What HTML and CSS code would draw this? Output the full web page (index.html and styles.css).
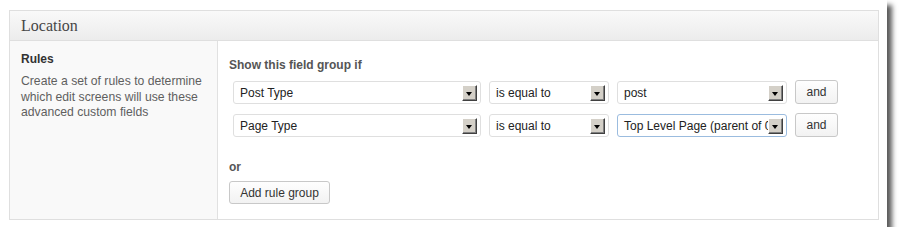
FILE: index.html
```html
<!DOCTYPE html>
<html>
<head>
<meta charset="utf-8">
<link rel="stylesheet" href="styles.css">
</head>
<body>
<div class="shot">
  <div class="postbox">
    <div class="hndle">Location</div>
    <div class="inside">
      <div class="label-col">
        <div class="label">Rules</div>
        <p class="desc">Create a set of rules to determine which edit screens will use these advanced custom fields</p>
      </div>
      <div class="field-col">
        <div class="title">Show this field group if</div>
        <div class="rules">
          <div class="rule">
            <div class="select s-param"><span class="val">Post Type</span><span class="arrow"></span></div>
            <div class="select s-op"><span class="val">is equal to</span><span class="arrow"></span></div>
            <div class="select s-value"><span class="val">post</span><span class="arrow"></span></div>
            <button class="btn btn-and">and</button>
          </div>
          <div class="rule">
            <div class="select s-param"><span class="val">Page Type</span><span class="arrow"></span></div>
            <div class="select s-op"><span class="val">is equal to</span><span class="arrow"></span></div>
            <div class="select s-value focused"><span class="val">Top Level Page (parent of 0)</span><span class="arrow"></span></div>
            <button class="btn btn-and">and</button>
          </div>
        </div>
        <div class="or">or</div>
        <button class="btn btn-add">Add rule group</button>
      </div>
    </div>
  </div>
</div>
</body>
</html>
```

FILE: styles.css
```css
html, body {
  margin: 0;
  padding: 0;
  background: #ffffff;
}

.shot {
  width: 887px;
  height: 227px;
  background: #ffffff;
  box-shadow: 5px 5px 5px rgba(0, 0, 0, 0.65);
  padding: 10px 0 0 9px;
  box-sizing: border-box;
  font-family: "Liberation Sans", Arial, sans-serif;
  font-size: 12px;
}

.postbox {
  width: 870px;
  height: 210px;
  box-sizing: border-box;
  border: 1px solid #dfdfdf;
  display: flex;
  flex-direction: column;
}

.hndle {
  height: 29px;
  border-bottom: 1px solid #dfdfdf;
  background: linear-gradient(to bottom, #f9f9f9, #ececec);
  font-family: "Liberation Serif", Georgia, serif;
  font-size: 16px;
  color: #464646;
  line-height: 29px;
  padding-left: 11px;
}

.inside {
  flex: 1;
  display: flex;
}

.label-col {
  width: 208px;
  flex: none;
  box-sizing: border-box;
  background: #f9f9f9;
  border-right: 1px solid #e1e1e1;
  padding: 10px 11px 0 11px;
}

.label {
  font-weight: bold;
  color: #333;
  line-height: 16px;
}

.desc {
  margin: 7px 0 0 0;
  color: #5f5f5f;
  line-height: 15.6px;
  font-size: 12.2px;
}

.field-col {
  flex: 1;
  padding: 16px 11px 0 11px;
}

.title {
  font-weight: bold;
  color: #555;
  line-height: 16px;
}

.rules {
  margin-top: 8px;
  display: flex;
  flex-direction: column;
  gap: 10px;
  padding-left: 4px;
}

.rule {
  display: flex;
  align-items: center;
  height: 23px;
}

.select {
  height: 23px;
  box-sizing: border-box;
  border: 1px solid #dfdfdf;
  border-radius: 3px;
  background: #fff;
  display: flex;
  align-items: center;
  color: #222;
  margin-right: 8px;
}

.select.focused {
  border-color: #9bbcdf;
}

.val {
  flex: 1;
  overflow: hidden;
  white-space: nowrap;
  padding-left: 6px;
  line-height: 16px;
}

.arrow {
  flex: none;
  width: 15px;
  height: 16px;
  box-sizing: border-box;
  margin-right: 3px;
  background: #d4d0c8;
  border-top: 1px solid #ffffff;
  border-left: 1px solid #ffffff;
  border-right: 1px solid #404040;
  border-bottom: 1px solid #404040;
  box-shadow: inset -1px -1px 0 #808080;
  position: relative;
}

.arrow::after {
  content: "";
  position: absolute;
  left: 3px;
  top: 6px;
  border-left: 3.5px solid transparent;
  border-right: 3.5px solid transparent;
  border-top: 4px solid #000;
}

.s-param { width: 248px; }
.s-op { width: 120px; }
.s-value { width: 170px; }

.btn {
  font-family: "Liberation Sans", Arial, sans-serif;
  font-size: 12px;
  color: #333;
  background: linear-gradient(to bottom, #fefefe, #f2f2f2);
  border: 1px solid #c8c8c8;
  border-radius: 3px;
  padding: 0;
  margin: 0;
}

.btn-and {
  width: 43px;
  height: 24px;
  margin-top: -2px;
}

.or {
  margin-top: 22px;
  font-weight: bold;
  color: #555;
  line-height: 16px;
}

.btn-add {
  margin-top: 6px;
  width: 101px;
  height: 23px;
}
```
